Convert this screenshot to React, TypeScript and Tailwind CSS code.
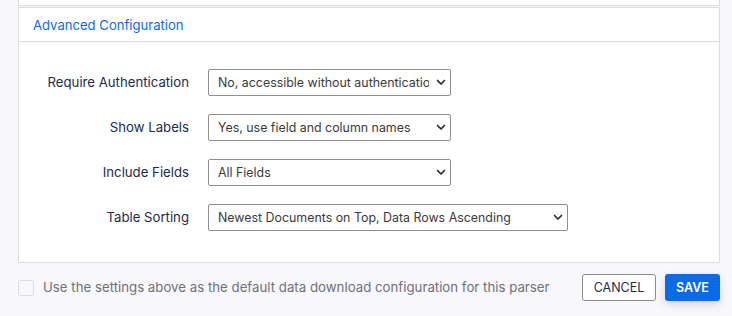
import React from "react";

function Chevron() {
  return (
    <svg width="10" height="7" viewBox="0 0 10 7" className="shrink-0">
      <path d="M1.5 1.5 L5 5 L8.5 1.5" fill="none" stroke="#2a2a2a" strokeWidth="1.7" strokeLinecap="round" strokeLinejoin="round" />
    </svg>
  );
}

function Select({ value, width }: { value: string; width: string }) {
  return (
    <div className={`${width} h-[27px] border border-[#8f8f8f] rounded-[2px] bg-white flex items-center pl-[9px] pr-[3px]`}>
      <div className="flex-1 overflow-hidden whitespace-nowrap text-[12.4px] text-[#3a3a3a] pt-[1px]">{value}</div>
      <div className="pl-[7px] pr-[1px]">
        <Chevron />
      </div>
    </div>
  );
}

const rows = [
  { label: "Require Authentication", value: "No, accessible without authentication", wide: false },
  { label: "Show Labels", value: "Yes, use field and column names", wide: false },
  { label: "Include Fields", value: "All Fields", wide: false },
  { label: "Table Sorting", value: "Newest Documents on Top, Data Rows Ascending", wide: true },
];

export default function App() {
  return (
    <div className="w-[732px] h-[316px] bg-[#f8f8fc] font-['Inter',sans-serif] overflow-hidden">
      <div className="ml-[18px] w-[702px] h-[6px] border-x border-b border-[#dcdcdf] bg-white" />
      <div className="mt-[1px] ml-[18px] w-[702px] border border-[#dcdcdf] bg-white">
        <div className="h-[34px] border-b border-[#dcdcdf] flex items-center pl-[14px] pt-[3px] text-[13.1px] text-[#0f6bdc]">
          Advanced Configuration
        </div>
        <div className="pt-[27px] pb-[31px] flex flex-col gap-[18px]">
          {rows.map((r) => (
            <div key={r.label} className="flex items-center h-[27px]">
              <div className="w-[170px] text-right text-[13.2px] text-[#1e2b48] pt-[1px]">{r.label}</div>
              <div className="ml-[19px]">
                <Select value={r.value} width={r.wide ? "w-[360px]" : "w-[243px]"} />
              </div>
            </div>
          ))}
        </div>
      </div>
      <div className="mt-[11px] ml-[18px] w-[702px] h-[27px] flex items-center">
        <div className="w-[16px] h-[16px] border border-[#dcdcdf] rounded-[2px] bg-[#f8f8fc]" />
        <div className="ml-[9px] text-[13.25px] text-[#707075] pt-[1px]">
          Use the settings above as the default data download configuration for this parser
        </div>
        <div className="ml-auto flex items-center gap-[9px]">
          <button className="h-[27px] w-[74px] border border-[#8c8c8c] rounded-[3px] bg-white text-[12.5px] text-[#1e2b48] flex items-center justify-center pt-[1px]">
            CANCEL
          </button>
          <button className="h-[27px] w-[55px] rounded-[3px] bg-[#0b6be6] text-white text-[12.5px] font-semibold flex items-center justify-center pt-[1px] shadow-[0_3px_8px_rgba(0,0,0,0.15)]">
            SAVE
          </button>
        </div>
      </div>
    </div>
  );
}
